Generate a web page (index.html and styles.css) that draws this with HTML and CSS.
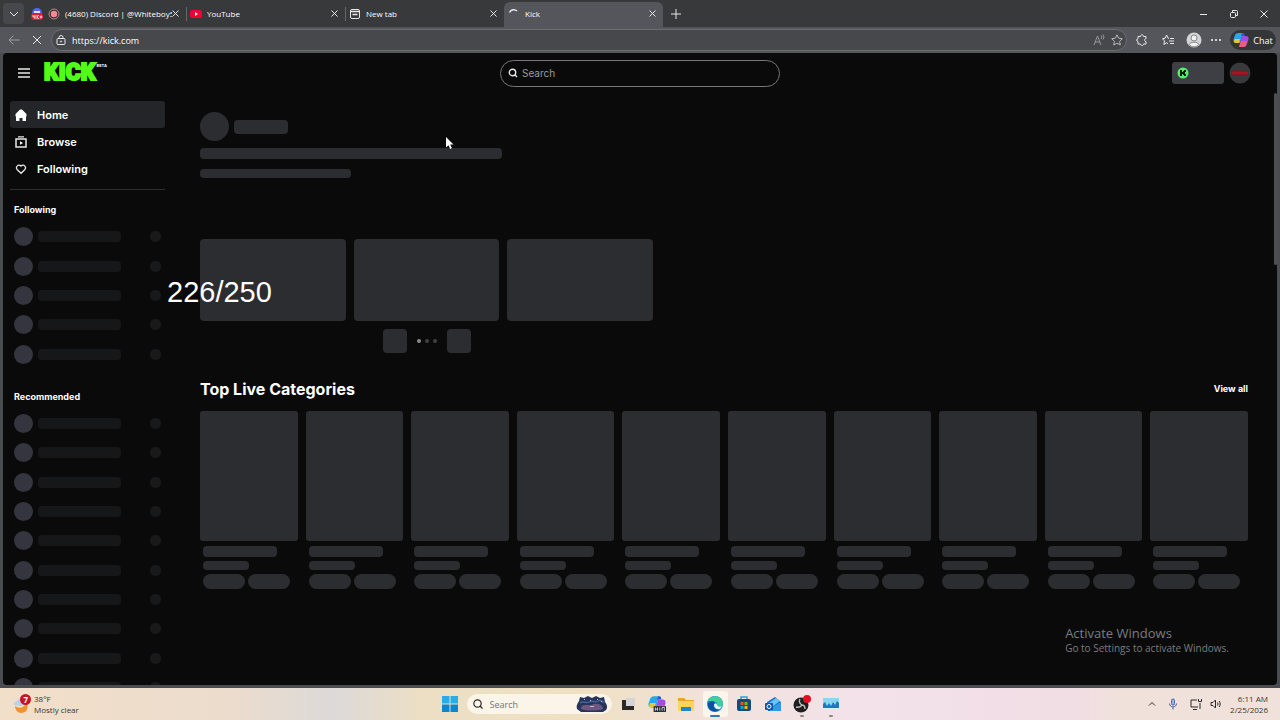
FILE: index.html
```
<!DOCTYPE html>
<html lang="en">
<head>
    <meta charset="UTF-8">
    <meta name="viewport" content="width=device-width, initial-scale=1.0">
    <title>Kick</title>
    <link rel="stylesheet" href="styles.css">
</head>
<body>
<div class="tabs">
    <button class="tab-list" aria-label="Tab list"><svg width="10" height="10" viewBox="0 0 10 10"><path d="M1 3l4 4 4-4"/></svg></button>
    <div class="tab">
        <svg class="fav solid" width="12" height="12" viewBox="0 0 12 12"><circle cx="6" cy="5" r="5" fill="#5865f2"/><path d="M3 3h6v3H3z" fill="#dfe2ff"/><rect y="5" width="12" height="7" rx="3" fill="#d8202f"/><path d="M2 7v2h2M4 7v4M6 7v4M8 7l-2 2 2 2M8.500 9h3M10 7.500v3" stroke="#fff" stroke-width=".8" fill="none"/></svg>
        <svg class="fav solid" width="12" height="12" viewBox="0 0 12 12"><circle cx="6" cy="6" r="5" fill="#3b3234" stroke="#b9868a"/><circle cx="6" cy="6" r="3.200" fill="#f08f93"/></svg>
        <span class="tab-title">(4680) Discord | @Whiteboy5</span>
        <button class="close" aria-label="Close tab"><svg width="7" height="7" viewBox="0 0 7 7"><path d="M.5.5l6 6M6.500.5l-6 6"/></svg></button>
    </div>
    <div class="tab">
        <svg class="fav solid" width="12" height="12" viewBox="0 0 12 12"><rect y="2" width="12" height="8" rx="2" fill="#f00033"/><path d="M5 4l3 2-3 2z" fill="#fff"/></svg>
        <span class="tab-title">YouTube</span>
        <button class="close" aria-label="Close tab"><svg width="7" height="7" viewBox="0 0 7 7"><path d="M.5.5l6 6M6.500.5l-6 6"/></svg></button>
    </div>
    <div class="tab">
        <svg class="fav" width="12" height="12" viewBox="0 0 12 12"><rect x="1.500" y="1.500" width="9" height="9" rx="1.500"/><path d="M1.500 3.500h9M3.500 6.500h5" stroke-width="1.500"/></svg>
        <span class="tab-title">New tab</span>
        <button class="close" aria-label="Close tab"><svg width="7" height="7" viewBox="0 0 7 7"><path d="M.5.5l6 6M6.500.5l-6 6"/></svg></button>
    </div>
    <div class="tab active">
        <svg class="fav" width="12" height="12" viewBox="0 0 12 12"><path d="M1.500 4.500C3 1.500 6.500.8 9 3" stroke-width="1.600"/></svg>
        <span class="tab-title">Kick</span>
        <button class="close" aria-label="Close tab"><svg width="7" height="7" viewBox="0 0 7 7"><path d="M.5.5l6 6M6.500.5l-6 6"/></svg></button>
    </div>
    <button class="new-tab" aria-label="New tab"><svg width="10" height="10" viewBox="0 0 10 10"><path d="M5 0v10M0 5h10"/></svg></button>
    <div class="window-buttons">
        <button aria-label="Minimize"><svg width="8" height="8" viewBox="0 0 8 8"><path d="M0 4.500h7"/></svg></button>
        <button aria-label="Restore"><svg width="8" height="8" viewBox="0 0 8 8"><rect x=".5" y="2.500" width="5" height="5" rx="1"/><path d="M2.500 2V.5h4a1 1 0 0 1 1 1v4H6"/></svg></button>
        <button aria-label="Close"><svg width="8" height="8" viewBox="0 0 8 8"><path d="M.5.5l7 7M7.500.5l-7 7"/></svg></button>
    </div>
</div>

<div class="toolbar">
    <button class="back dim" aria-label="Back"><svg width="12" height="12" viewBox="0 0 12 12"><path d="M11.500 6H1M5.500 1.500L1 6l4.500 4.500"/></svg></button>
    <button aria-label="Stop"><svg width="10" height="10" viewBox="0 0 10 10"><path d="M1 1l8 8M9 1L1 9"/></svg></button>
    <div class="address">
        <svg width="10" height="10" viewBox="0 0 10 10"><rect x="1" y="3.500" width="8" height="6" rx="1"/><path d="M3 3.500V2.500a2 2 0 0 1 4 0v1"/><circle cx="5" cy="6.500" r=".6"/></svg>
        <input type="text" value="https://kick.com" aria-label="Address">
        <svg class="dim" width="12" height="12" viewBox="0 0 12 12"><path d="M1 11l3.500-9L8 11M2.200 8h4.600M8 1.500q1.500 1.500 0 3.500M10 .5q2 2.500 0 5"/></svg>
        <svg class="soft" width="12" height="12" viewBox="0 0 12 12"><path d="M6 .8l1.600 3.400 3.700.5-2.700 2.600.7 3.700L6 9.200 2.700 11l.7-3.700L.7 4.700l3.700-.5z"/></svg>
    </div>
    <button aria-label="Extensions"><svg width="12" height="12" viewBox="0 0 12 12"><path d="M2 2.500h2.500c0-2.300 3-2.300 3 0H10v2.200c-2 0-2 2.800 0 2.800V10H7.500c0 2-3 2-3 0H2V7.500c-1.800 0-1.800-2.800 0-2.800z"/></svg></button>
    <button class="favorites" aria-label="Favorites"><svg width="12" height="12" viewBox="0 0 12 12"><path d="M7 4.200H6L4.600 1 3.200 4.200.5 4.700l2 2.200-.6 3.600 2.700-1.700 1.400.8M8 4.500h4M7 7h5M8 9.500h4"/></svg></button>
    <button aria-label="Profile"><svg class="solid" width="16" height="16" viewBox="0 0 16 16"><circle cx="8" cy="8" r="7.500" fill="#d3d4d5"/><circle cx="8" cy="6" r="3" fill="#f1f1f1" stroke="#85878a"/><path d="M3 12.500c1-3 9-3 10 0-2.500 3-7.500 3-10 0z" fill="#f1f1f1" stroke="#85878a"/></svg></button>
    <button aria-label="Settings and more"><svg class="solid" width="10" height="4" viewBox="0 0 10 4"><circle cx="1" cy="2" r="1"/><circle cx="5" cy="2" r="1"/><circle cx="9" cy="2" r="1"/></svg></button>
    <button class="chat">
        <svg class="solid" width="16" height="16" viewBox="0 0 16 16"><use href="#copilot"/></svg>
        Chat
    </button>
</div>

<div class="page">
    <header>
        <button class="menu" aria-label="Menu"><svg width="12" height="10" viewBox="0 0 12 10"><path d="M0 1h12M0 5h12M0 9h12" stroke-width="1.500"/></svg></button>
        <a class="logo" href="#">KICK<sup>BETA</sup></a>
        <label class="search">
            <svg width="10" height="10" viewBox="0 0 10 10"><circle cx="4.500" cy="4.500" r="3.200" stroke-width="1.400"/><path d="M6.800 6.800L9 9" stroke-width="1.400"/></svg>
            <input type="text" placeholder="Search" aria-label="Search">
        </label>
        <div class="account">
            <button class="balance" aria-label="Balance"><svg class="solid" width="12" height="12" viewBox="0 0 12 12"><circle cx="6" cy="6" r="5.500" fill="#52f06c"/><path d="M3 3h2v2h1V4h1V3h2v2H8v2h1v2H7V8H6V7H5v2H3z" fill="#06230b"/></svg></button>
            <button class="avatar" aria-label="Account"><svg class="solid" width="22" height="22" viewBox="0 0 22 22"><circle cx="11" cy="11" r="10.500" fill="#393a3c"/><path d="M3 8.500l16 .5-1 4H4z" fill="#8f1220"/><path d="M3 11h16" stroke="#c0182a"/></svg></button>
        </div>
    </header>

    <div class="layout">
        <aside>
            <nav>
                <a class="current" href="#"><svg class="solid" width="12" height="12" viewBox="0 0 12 12"><path d="M5 .5h2L11.500 5v2.500H11V12H7.500V9h-3v3H1V7.500H.5V5z"/></svg>Home</a>
                <a href="#"><svg width="12" height="12" viewBox="0 0 12 12"><path d="M3 .8h6" stroke-width="1.200"/><rect x="1" y="3" width="10" height="8" stroke-width="1.500"/><path d="M5 5.300l3 1.700-3 1.700z" fill="#fff" stroke="none"/></svg>Browse</a>
                <a href="#"><svg width="12" height="12" viewBox="0 0 12 12"><path d="M6 10.300L2.300 6.700C0 4 3.500.3 6 3.200 8.500.3 12 4 9.700 6.700z" stroke-width="1.300"/></svg>Following</a>
            </nav>
            <h2>Following</h2>
            <ul class="channels" id="following"></ul>
            <h2>Recommended</h2>
            <ul class="channels recommended" id="recommended"></ul>
        </aside>

        <main>
            <section class="hero">
                <div class="streamer"><span class="bone round"></span><span class="bone name"></span></div>
                <div class="bone line"></div>
                <div class="bone line short"></div>
                <div class="streams">
                    <div class="bone"></div>
                    <div class="bone"></div>
                    <div class="bone"></div>
                </div>
                <div class="pager">
                    <button class="bone" aria-label="Previous"></button>
                    <div class="dots"><i class="on"></i><i></i><i></i></div>
                    <button class="bone" aria-label="Next"></button>
                </div>
            </section>

            <section>
                <div class="section-head">
                    <h1>Top Live Categories</h1>
                    <a href="#">View all</a>
                </div>
                <div class="categories" id="categories"></div>
            </section>
        </main>
    </div>
    <div class="scrollbar"></div>
    <div class="watermark">
        <p>Activate Windows</p>
        <small>Go to Settings to activate Windows.</small>
    </div>
</div>

<footer class="taskbar">
    <button class="weather">
        <svg class="solid" width="18" height="20" viewBox="0 0 18 20"><path d="M2 12c4 3 9 2 11-3 4 5 0 10-5 10-3 0-6-3-6-7z" fill="#f0932e"/><path d="M1 11c-1-3 2-4 3-4 1-3 5-3 6 0 1 3 0 5-3 5z" fill="#b9d3e8"/><circle cx="12.500" cy="5.500" r="5.500" fill="#c41425"/><text x="10.500" y="8.500" fill="#fff" font-size="8" font-weight="700">7</text></svg>
        <span>38°F<br>Mostly clear</span>
    </button>
    <div class="apps">
        <button aria-label="Start"><svg class="solid" width="16" height="16" viewBox="0 0 16 16"><path d="M0 0h7.500v7.500H0zM8.500 0H16v7.500H8.500z" fill="#25aee8"/><path d="M0 8.500h7.500V16H0zM8.500 8.500H16V16H8.500z" fill="#0c86cd"/></svg></button>
        <label class="task-search">
            <svg width="10" height="10" viewBox="0 0 10 10"><circle cx="4.500" cy="4.500" r="3.700" stroke-width="1.200"/><path d="M7 7l2.500 2.500" stroke-width="1.200"/></svg>
            <input type="text" placeholder="Search" aria-label="Search Windows">
            <svg class="solid" width="32" height="18" viewBox="0 0 32 18"><path d="M1 14c-1-4 1-6 2-8l1-4 4 1 4-2 4 2 4-2 4 2 4-1 1 5c2 3 3 5 1 8l-3 2H5z" fill="#27345c"/><path d="M5 14c0-5 4-4 10-4 7-3 12 0 12 4-6 2-16 2-22 0z" fill="#6e587f"/><path d="M4 8c3-3 6 1 9-1s6 1 9-1 5 1 6 2" fill="none" stroke="#456394" stroke-width="1.500"/><path d="M8 4h1v1H8zM14 5h1v1h-1zM21 4h1v1h-1zM25 6h1v1h-1zM14 11h4v1h-4z" fill="#c2b8d5"/></svg>
        </label>
        <button aria-label="Task view"><svg class="solid" width="14" height="14" viewBox="0 0 14 14"><path d="M1 3h9v10H1z" fill="#292929"/><path d="M5 1h9v8H5z" fill="#d4d4d4"/><path d="M1 9h12v4H1z" fill="#292929"/></svg></button>
        <button aria-label="Copilot"><svg class="solid" width="18" height="18" viewBox="0 0 16 16"><g id="copilot"><path d="M5 1h5l-3 10H3C0 11 0 8 1 6l1-3c.6-1 1.500-2 3-2z" fill="#27a8e8"/><path d="M2 7l5 0-1 4H3C0 11 1 8 2 7z" fill="#e9c532"/><path d="M10 1c1.500 0 1.600 1 2 3H9l-1 0 1-3z" fill="#3156d6"/><path d="M9 4h4c3 0 3 3 2 5l-1 3c-.6 2-1.500 3-3 3H6z" fill="#a34be5"/><path d="M8 9h6l-1 4c-.6 1.500-1.500 2-3 2H6z" fill="#f05a80"/></g><rect x="5" y="10" width="11" height="5" fill="#18202c"/><path d="M6.500 14v-3M8.500 14v-3M6.500 12.500h2M10.500 11v3M12.500 14v-3h2v3" stroke="#fff" stroke-width=".7" fill="none"/></svg></button>
        <button aria-label="File Explorer"><svg class="solid" width="16" height="16" viewBox="0 0 16 16"><path d="M0 2h6l2 2h8v11H0z" fill="#e5a823"/><path d="M0 5h16v10H0z" fill="#ffd35d"/><path d="M3 11h10v4H3z" fill="#2584cf"/></svg></button>
        <button class="open focused" aria-label="Edge"><svg class="solid" width="16" height="16" viewBox="0 0 16 16"><circle cx="8" cy="8" r="8" fill="#138bd2"/><path d="M1 5C4-2 15-1 16 7c0 4-5 5-6 3 1-3-2-5-5-5z" fill="#43cf9b"/><path d="M1 7c5-4 8 0 6 2-1 3 2 5 6 4-3 4-11 3-12-3z" fill="#0e529e"/><path d="M7 9c0-2 3-2 3 0 1 2 3 2 5 1l-2 3c-3 1-6-1-6-4z" fill="#e8f4f7"/></svg></button>
        <button aria-label="Store"><svg class="solid" width="16" height="16" viewBox="0 0 16 16"><path d="M5 4V1h6v3" fill="none" stroke="#2f9edb" stroke-width="1.500"/><rect x="1" y="3" width="14" height="12" rx="2" fill="#164b78"/><path d="M4.500 6h3v3h-3z" fill="#f25022"/><path d="M8.500 6h3v3h-3z" fill="#7fba00"/><path d="M4.500 10h3v3h-3z" fill="#00a4ef"/><path d="M8.500 10h3v3h-3z" fill="#ffb900"/></svg></button>
        <button aria-label="Outlook"><svg class="solid" width="16" height="16" viewBox="0 0 16 16"><path d="M2 6l8-5 6 5v9H3z" fill="#1c6fd0"/><path d="M4 7l7-5 4 3-8 6z" fill="#67c5f5"/><path d="M6 12l10-6v9H5z" fill="#2d9bea"/><rect y="7" width="8" height="7" rx="1" fill="#1253a8"/><circle cx="4" cy="10.500" r="2" fill="none" stroke="#fff"/></svg></button>
        <button class="open" aria-label="OBS Studio"><svg class="solid" width="18" height="18" viewBox="0 0 18 18"><circle cx="8" cy="10" r="7.500" fill="#201f20"/><path d="M7 4c-2 4 1 5 2 6M3 12c4 1 5-1 6-2M12 14c0-4-2-4-3-4" stroke="#c2c2c2" stroke-width="1.300" fill="none"/><circle cx="14" cy="4" r="4" fill="#e50e23"/></svg></button>
        <button class="open" aria-label="Task Manager"><svg class="solid" width="16" height="16" viewBox="0 0 16 16"><rect y="2" width="16" height="12" fill="#1e79be"/><path d="M0 2h16v5l-2-2-2 4-2-3-2 4-2-3-2 3-2-4-2 2z" fill="#8bd6f4"/><path d="M0 12h16v2H0z" fill="#d5f0fa"/></svg></button>
    </div>
    <div class="tray">
        <svg width="8" height="8" viewBox="0 0 8 8"><path d="M1 5.500l3-3 3 3"/></svg>
        <svg class="mic" width="10" height="12" viewBox="0 0 10 12"><rect x="3.500" y="1" width="3" height="6" rx="1.500" fill="#9cb2e4"/><path d="M1.500 5.500c0 4.500 7 4.500 7 0M5 9v2.500"/></svg>
        <svg width="12" height="12" viewBox="0 0 12 12"><path d="M7 2H1v7h7M3 11.500h4M10 11V5M8.500 1v2.500h3V1"/></svg>
        <svg width="12" height="12" viewBox="0 0 12 12"><path d="M1 4.500h2L5.500 2v8L3 7.500H1zM7.500 4.500q1 1.500 0 3M9.300 3q2 3 0 6"/></svg>
        <div class="clock">6:11 AM<br>2/25/2026</div>
    </div>
</footer>

<div class="counter">226/250</div>
<svg class="cursor solid" width="10" height="14" viewBox="0 0 10 14"><path d="M1 1v10.500l2.500-2.300 1.700 3.700 1.700-.8-1.700-3.500H8.500z"/></svg>

<script>
    const channel = '<li><span class="face"></span><span class="label"></span><span class="count"></span></li>';
    document.getElementById('following').innerHTML = channel.repeat(5);
    document.getElementById('recommended').innerHTML = channel.repeat(12);

    const category = `<div class="category">
        <div class="bone cover"></div>
        <div class="info">
            <div class="bone title"></div>
            <div class="bone viewers"></div>
            <div class="tags"><span class="bone"></span><span class="bone"></span></div>
        </div>
    </div>`;
    document.getElementById('categories').innerHTML = category.repeat(10);
</script>
</body>
</html>
```
FILE: styles.css
```
* {
    box-sizing: border-box;
}

body {
    margin: 0;
    height: 100vh;
    display: flex;
    flex-direction: column;
    overflow: hidden;
    background: #4b4c50;
    color: #fff;
    font-family: 'Open Sans', 'Noto Sans', sans-serif;
    font-size: 9px;
}

button {
    display: flex;
    align-items: center;
    justify-content: center;
    padding: 0;
    border: none;
    background: none;
    color: inherit;
    font: inherit;
}

input {
    flex: 1;
    min-width: 0;
    padding: 0;
    border: none;
    outline: none;
    background: none;
    color: inherit;
    font: inherit;
}

a {
    color: inherit;
    text-decoration: none;
}

svg {
    flex: none;
    fill: none;
    stroke: #e8e8e8;
}

svg.solid {
    fill: #fff;
    stroke: none;
}

h1, h2, p, ul {
    margin: 0;
    padding: 0;
}

/* Browser tabs */
.tabs {
    flex: none;
    display: flex;
    align-items: flex-end;
    height: 27px;
    padding-left: 3px;
    background: #38393b;
}

.tab-list {
    width: 21px;
    height: 21px;
    margin: 0 3px 3px 0;
    border-radius: 4px;
    background: #47484b;
}

.tab {
    flex: 0 1 159px;
    min-width: 0;
    display: flex;
    align-items: center;
    height: 25px;
    padding: 0 7px 2px 4px;
    border-radius: 6px 6px 0 0;
    font-size: 8px;
}

.tab + .tab:not(.active) {
    background: linear-gradient(#66676a, #66676a) 0 5px / 1px 14px no-repeat;
}

.tab.active {
    background: #55565b;
}

.fav {
    margin-right: 5px;
}

.tab-title {
    flex: 1;
    overflow: hidden;
    white-space: nowrap;
}

.new-tab {
    width: 26px;
    height: 26px;
}

.window-buttons {
    display: flex;
    gap: 22px;
    height: 27px;
    margin-left: auto;
    padding-right: 12px;
}

/* Address bar */
.toolbar {
    flex: none;
    display: flex;
    align-items: center;
    gap: 9px;
    height: 26px;
    padding: 0 4px 0 8px;
    background: #55565b;
}

.back {
    margin-right: 3px;
}

.address {
    flex: 1;
    display: flex;
    align-items: center;
    gap: 6px;
    height: 22px;
    padding: 0 3px 0 4px;
    border: 1px solid #6c6d71;
    border-radius: 11px;
    background: #47484c;
}

.dim {
    opacity: 0.5;
}

.soft {
    opacity: 0.7;
}

.favorites {
    margin: 0 3px 0 5px;
}

.chat {
    gap: 4px;
    width: 46px;
    height: 20px;
    border-radius: 10px;
    background: #343537;
}

/* Page */
.page {
    position: relative;
    flex: 1;
    min-height: 0;
    display: flex;
    flex-direction: column;
    margin: 0 3px 3px;
    overflow: hidden;
    border-radius: 4px;
    background: #0a0a0b;
    font-family: Inter, sans-serif;
}

.page > header {
    flex: none;
    display: grid;
    grid-template-columns: 1fr 280px 1fr;
    grid-template-areas: "brand search account";
    align-items: center;
    height: 40px;
    padding: 0 15px;
}

.menu {
    grid-area: brand;
    width: 12px;
}

.logo {
    grid-area: brand;
    display: flex;
    margin-left: 26px;
    color: #53fc18;
    font: 900 23px/24px Roboto, sans-serif;
    -webkit-text-stroke: 2px #53fc18;
}

.logo sup {
    margin-left: 1px;
    color: #fff;
    font: 700 4px/10px Inter, sans-serif;
    -webkit-text-stroke: 0;
}

.search {
    grid-area: search;
    display: flex;
    align-items: center;
    gap: 4px;
    height: 27px;
    padding: 0 7px;
    border: 1px solid #77787a;
    border-radius: 14px;
    font-size: 10px;
}

.search input::placeholder {
    color: #9a9b9d;
}

.account {
    grid-area: account;
    display: flex;
    justify-content: flex-end;
    gap: 5px;
    padding-right: 11px;
}

.balance {
    justify-content: flex-start;
    width: 52px;
    height: 22px;
    padding-left: 5px;
    border-radius: 3px;
    background: #3d3f44;
}

.layout {
    flex: 1;
    min-height: 0;
    display: flex;
}

aside {
    flex: none;
    width: 162px;
    padding: 8px 0 0 7px;
    overflow: hidden;
}

nav {
    padding-bottom: 7px;
    border-bottom: 1px solid #2d2e30;
}

nav a {
    display: flex;
    align-items: center;
    gap: 10px;
    height: 27px;
    padding-left: 5px;
    border-radius: 3px;
    font-size: 11px;
    font-weight: 600;
}

nav a.current {
    background: #232528;
}

aside h2 {
    height: 32px;
    padding: 12px 0 0 4px;
    font-size: 9px;
    font-weight: 700;
    line-height: 16px;
}

.channels {
    display: grid;
    grid-auto-rows: 1fr;
    height: 147px;
    margin-bottom: 8px;
    padding: 0 4px;
    list-style: none;
}

.channels.recommended {
    height: 352px;
}

.channels li {
    display: flex;
    align-items: center;
    gap: 5px;
}

.face {
    width: 19px;
    height: 19px;
    border-radius: 50%;
    background: #34353e;
}

.label {
    width: 83px;
    height: 11px;
    border-radius: 4px;
    background: #161718;
}

.count {
    width: 11px;
    height: 11px;
    margin-left: auto;
    border-radius: 5px;
    background: #18191a;
}

.bone {
    border-radius: 4px;
    background: #2c2d30;
}

main {
    flex: 1;
    min-width: 0;
    padding: 19px 29px 0 35px;
}

.hero {
    max-width: 453px;
}

.streamer {
    display: flex;
    align-items: center;
    gap: 5px;
}

.round {
    width: 29px;
    height: 29px;
    border-radius: 50%;
}

.name {
    width: 54px;
    height: 14px;
}

.line {
    width: 302px;
    height: 11px;
    margin-top: 7px;
}

.line.short {
    width: 151px;
    height: 9px;
    margin-top: 10px;
}

.streams {
    display: grid;
    grid-template-columns: repeat(3, 1fr);
    gap: 8px;
    margin-top: 61px;
}

.streams .bone {
    aspect-ratio: 16 / 9;
}

.pager {
    display: flex;
    align-items: center;
    justify-content: center;
    gap: 10px;
    margin-top: 8px;
}

.pager button {
    width: 24px;
    height: 24px;
}

.dots {
    display: flex;
    gap: 4px;
}

.dots i {
    width: 4px;
    height: 4px;
    border-radius: 50%;
    background: #414244;
}

.dots .on {
    background: #8b8c8e;
}

.section-head {
    display: flex;
    align-items: center;
    justify-content: space-between;
    margin: 24px 0 10px;
    line-height: 24px;
}

.section-head h1 {
    font-size: 16px;
    font-weight: 700;
}

.section-head a {
    font-size: 9px;
    font-weight: 700;
}

.categories {
    display: grid;
    grid-template-columns: repeat(10, 1fr);
    gap: 8px;
}

.cover {
    aspect-ratio: 3 / 4;
    border-radius: 3px;
}

.info {
    padding: 5px 3px;
}

.title {
    width: 74px;
    height: 11px;
}

.viewers {
    width: 46px;
    height: 9px;
    margin: 4px 0;
}

.tags {
    display: flex;
    gap: 3px;
}

.tags .bone {
    width: 42px;
    height: 15px;
    border-radius: 8px;
}

.scrollbar {
    position: absolute;
    top: 40px;
    right: 0;
    width: 3px;
    height: 172px;
    border-radius: 2px;
    background: #4d4e50;
}

.watermark {
    position: absolute;
    right: 48px;
    bottom: 30px;
    color: #7b7c7d;
    font-family: 'Open Sans', 'Noto Sans', sans-serif;
}

.watermark p {
    font-size: 13px;
    line-height: 18px;
}

.watermark small {
    display: block;
    font-size: 10px;
    line-height: 13px;
}

/* Windows taskbar */
.taskbar {
    flex: none;
    display: grid;
    grid-template-columns: 1fr auto 1fr;
    align-items: center;
    height: 32px;
    padding: 0 12px 0 13px;
    background: linear-gradient(90deg, #f2dfc9, #ecdccd 18%, #dcd9d8 26%, #ecdfc4 33%, #efe0c2 45%, #f2e2dc 56%, #f3e2ea 68%, #f1dde4 84%, #f0e2da 88%);
    color: #39342f;
    font-size: 8px;
    line-height: 11px;
}

.weather {
    justify-self: start;
    gap: 3px;
    text-align: left;
}

.apps {
    display: flex;
    align-items: center;
    gap: 4px;
}

.apps button {
    position: relative;
    width: 25px;
    height: 26px;
    border-radius: 3px;
}

.task-search {
    display: flex;
    align-items: center;
    gap: 7px;
    width: 145px;
    height: 20px;
    padding: 0 4px 0 6px;
    border-radius: 10px;
    background: #faf4e9;
    font-size: 9px;
}

.task-search svg:first-child,
.tray svg {
    stroke: #2d2b2a;
}

.apps .focused {
    background: #fbf5ec;
}

.open::after {
    content: "";
    position: absolute;
    bottom: 0;
    width: 4px;
    height: 2px;
    border-radius: 1px;
    background: #8d8688;
}

.focused::after {
    width: 10px;
    background: #2b78bb;
}

.tray {
    justify-self: end;
    display: flex;
    align-items: center;
    gap: 8px;
}

.tray .mic {
    margin: 0 4px;
    stroke: #4964a8;
}

.clock {
    text-align: right;
}

/* Overlays */
.counter {
    position: absolute;
    top: 275px;
    left: 167px;
    font: 29px/34px 'Liberation Sans', sans-serif;
}

.cursor {
    position: absolute;
    top: 136px;
    left: 445px;
}
```
